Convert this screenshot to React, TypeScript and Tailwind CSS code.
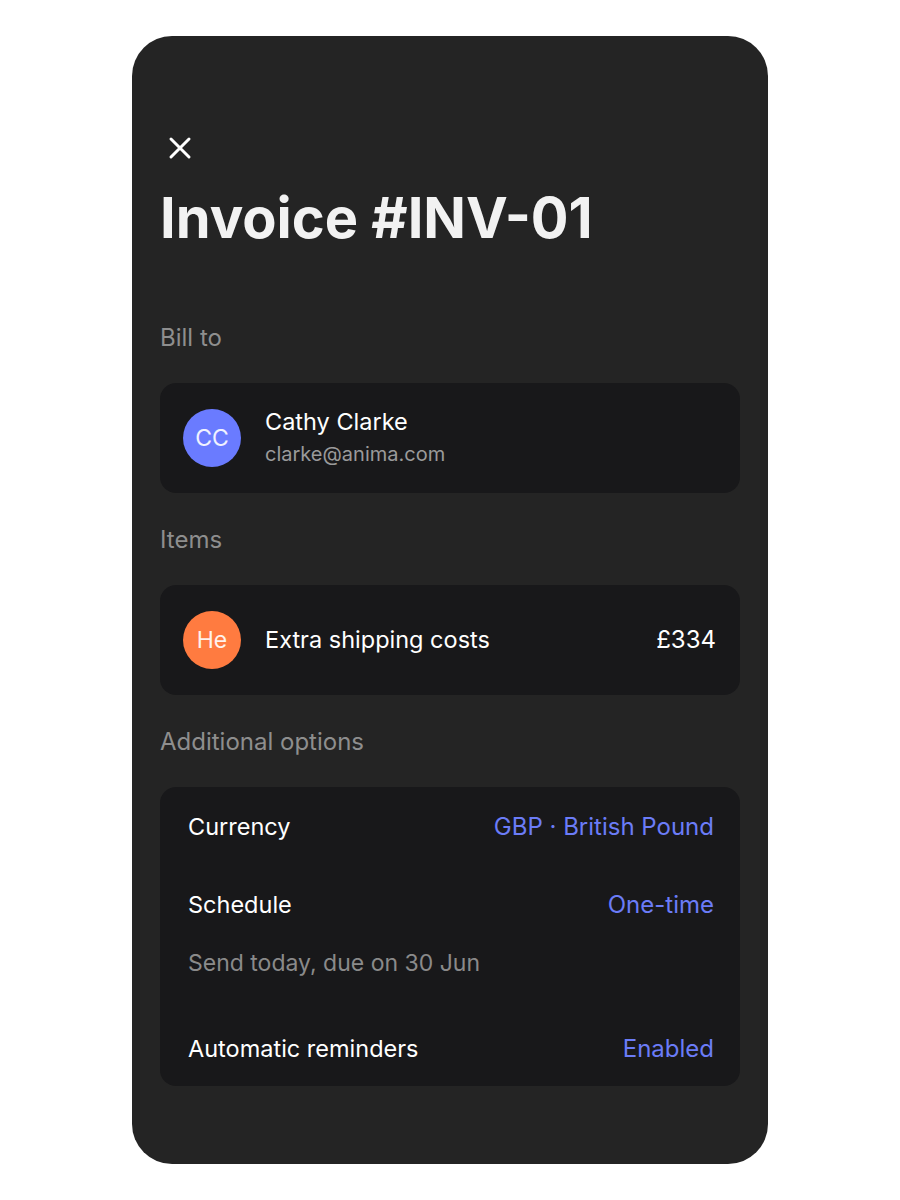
const font = { fontFamily: "Inter, 'Noto Sans', sans-serif" };

const Avatar = ({ label, color }: { label: string; color: string }) => (
  <div
    className={`flex h-[58px] w-[58px] shrink-0 items-center justify-center rounded-full text-[23px] text-white/90 ${color}`}
  >
    {label}
  </div>
);

const SectionLabel = ({ children }: { children: string }) => (
  <p className="mb-[30px] h-[30px] text-[24px] leading-[30px] text-[#8e8e8e]">
    {children}
  </p>
);

const OptionRow = ({ label, value }: { label: string; value: string }) => (
  <div className="flex h-6 items-center justify-between leading-6">
    <span className="text-[23.5px] text-white">{label}</span>
    <span className="text-[24px] text-[#6b7cf7]">{value}</span>
  </div>
);

export default function App() {
  return (
    <div className="flex min-h-[1200px] justify-center bg-white pt-9" style={font}>
      <div className="flex h-[1128px] w-[636px] flex-col rounded-[40px] bg-[#242424] px-7 pt-[100px]">
        <button className="ml-2 h-6 w-6 text-white">
          <svg width="24" height="24" viewBox="0 0 24 24" fill="none">
            <path
              d="M3 3L21 21M21 3L3 21"
              stroke="currentColor"
              strokeWidth="3"
              strokeLinecap="round"
            />
          </svg>
        </button>

        <h1 className="mt-[25px] h-[67px] text-[56px] font-bold leading-[67px] text-[#f2f2f2]">
          Invoice #INV-01
        </h1>

        <div className="mt-[71px]">
          <SectionLabel>Bill to</SectionLabel>
          <div className="flex h-[110px] items-center gap-6 rounded-2xl bg-[#18181a] px-[23px]">
            <Avatar label="CC" color="bg-[#6a7bff]" />
            <div className="flex flex-col">
              <span className="text-[23.5px] leading-[33px] text-white">Cathy Clarke</span>
              <span className="text-[20px] leading-[33px] text-[#9a9a9a]">clarke@anima.com</span>
            </div>
          </div>
        </div>

        <div className="mt-8">
          <SectionLabel>Items</SectionLabel>
          <div className="flex h-[110px] items-center gap-6 rounded-2xl bg-[#18181a] pl-[23px] pr-6">
            <Avatar label="He" color="bg-[#ff7b40]" />
            <span className="flex-1 text-[23.5px] text-white">Extra shipping costs</span>
            <span className="text-[24px] text-white">£334</span>
          </div>
        </div>

        <div className="mt-8">
          <SectionLabel>Additional options</SectionLabel>
          <div className="flex flex-col rounded-2xl bg-[#18181a] pb-[25px] pl-7 pr-[26px] pt-7">
            <OptionRow label="Currency" value="GBP · British Pound" />
            <div className="mt-[54px]">
              <OptionRow label="Schedule" value="One-time" />
            </div>
            <p className="mt-[34px] h-6 text-[23px] leading-6 text-[#8a8a8a]">
              Send today, due on 30 Jun
            </p>
            <div className="mt-[62px]">
              <OptionRow label="Automatic reminders" value="Enabled" />
            </div>
          </div>
        </div>
      </div>
    </div>
  );
}
